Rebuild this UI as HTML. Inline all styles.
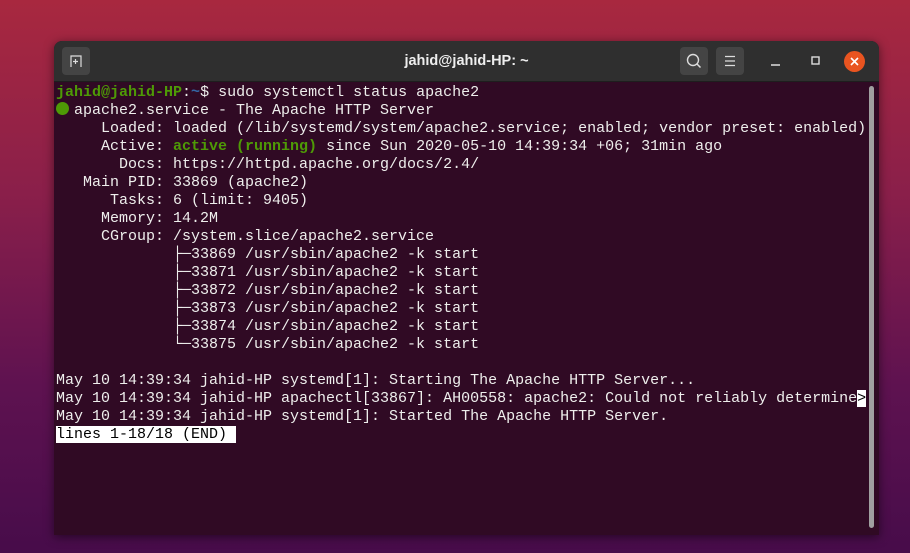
<!DOCTYPE html>
<html><head><meta charset="utf-8"><style>
*{margin:0;padding:0;box-sizing:border-box}
html,body{width:910px;height:553px;overflow:hidden}
body{background:linear-gradient(180deg,#a8283f 0%,#8a1f4a 35%,#5e1250 70%,#470c4a 100%);position:relative;font-family:"Liberation Sans",sans-serif}
.win{position:absolute;left:54px;top:41px;width:825px;height:494px;background:#300a24;border-radius:8px 8px 0 0;overflow:hidden;box-shadow:0 2px 10px rgba(0,0,0,.5)}
.tb{position:absolute;left:0;top:0;width:100%;height:41px;background:#2f2f2f;border-bottom:1px solid #1e1e1e}
.btn{position:absolute;top:6px;width:28px;height:28px;background:#444;border-radius:4px}
.title{position:absolute;left:0;right:0;top:12px;text-align:center;color:#eee;font-weight:bold;font-size:14.5px}
.term{position:absolute;left:2px;top:43px;font-family:"Liberation Mono",monospace;font-size:15px;line-height:18px;color:#eeeeec;white-space:pre}
.g{color:#4e9a06;font-weight:bold}
.b{color:#3465a4;font-weight:bold}
.inv{background:#fff;color:#000}
.dot{display:inline-block;width:13px;height:13px;border-radius:50%;background:#4e9a06;vertical-align:-1px;margin-right:-4px}
.sb{position:absolute;left:815px;top:45px;width:5px;height:442px;background:#a0a0a0;border-radius:3px}
</style></head><body>
<div class="win">
<div class="tb">
<div class="btn" style="left:8px"><svg width="28" height="28"><path d="M9 20V9h10v11M11 14.5h5M13.5 12v5" stroke="#ddd" stroke-width="1.2" fill="none"/></svg></div>
<div class="title">jahid@jahid-HP: ~</div>
<div class="btn" style="left:626px"><svg width="28" height="28"><circle cx="13" cy="13" r="5.5" stroke="#ddd" stroke-width="1.4" fill="none"/><path d="M17 17l3.5 3.5" stroke="#ddd" stroke-width="1.5"/></svg></div>
<div class="btn" style="left:662px"><svg width="28" height="28"><path d="M9 9.5h10M9 14h10M9 18.5h10" stroke="#ddd" stroke-width="1.3"/></svg></div>
<svg style="position:absolute;left:714px;top:12px" width="16" height="16"><path d="M3 12h9" stroke="#ddd" stroke-width="1.5"/></svg>
<svg style="position:absolute;left:754px;top:12px" width="16" height="16"><rect x="4" y="4" width="7" height="7" stroke="#ddd" stroke-width="1.4" fill="none"/></svg>
<div style="position:absolute;left:790px;top:10px;width:21px;height:21px;border-radius:50%;background:#e95420"><svg width="21" height="21"><path d="M7 7l7 7M14 7l-7 7" stroke="#fff" stroke-width="1.6"/></svg></div>
</div>
<div class="term"><span class="g">jahid@jahid-HP</span>:<span class="b">~</span>$ sudo systemctl status apache2
<span class="dot"></span> apache2.service - The Apache HTTP Server
     Loaded: loaded (/lib/systemd/system/apache2.service; enabled; vendor preset: enabled)
     Active: <span class="g">active (running)</span> since Sun 2020-05-10 14:39:34 +06; 31min ago
       Docs: https://httpd.apache.org/docs/2.4/
   Main PID: 33869 (apache2)
      Tasks: 6 (limit: 9405)
     Memory: 14.2M
     CGroup: /system.slice/apache2.service
             ├─33869 /usr/sbin/apache2 -k start
             ├─33871 /usr/sbin/apache2 -k start
             ├─33872 /usr/sbin/apache2 -k start
             ├─33873 /usr/sbin/apache2 -k start
             ├─33874 /usr/sbin/apache2 -k start
             └─33875 /usr/sbin/apache2 -k start

May 10 14:39:34 jahid-HP systemd[1]: Starting The Apache HTTP Server...
May 10 14:39:34 jahid-HP apachectl[33867]: AH00558: apache2: Could not reliably determine<span class="inv">&gt;</span>
May 10 14:39:34 jahid-HP systemd[1]: Started The Apache HTTP Server.
<span class="inv">lines 1-18/18 (END) </span></div>
<div class="sb"></div>
</div>
</body></html>
